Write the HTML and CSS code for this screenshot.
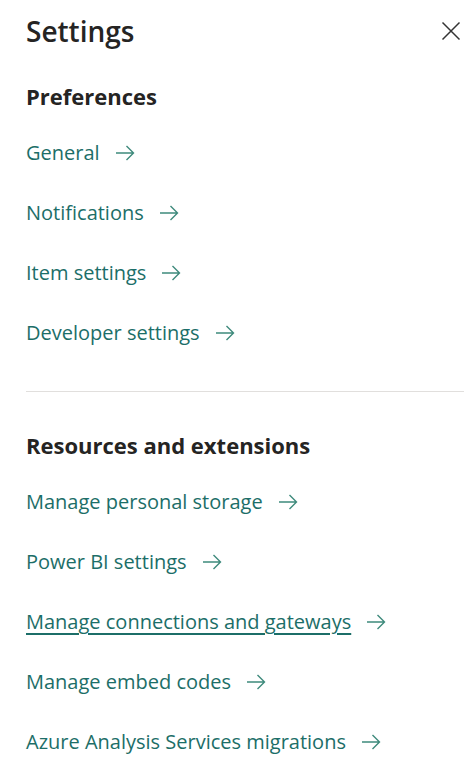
FILE: index.html
```html
<!DOCTYPE html>
<html>
<head>
<meta charset="utf-8">
<link rel="stylesheet" href="styles.css">
</head>
<body>
<div class="panel">
  <header class="head">
    <h1 class="title">Settings</h1>
    <button class="close" aria-label="Close">
      <svg width="20" height="20" viewBox="0 0 20 20"><path d="M1.5 1.5 L18.5 18.5 M18.5 1.5 L1.5 18.5" stroke="#333" stroke-width="1.5" fill="none"/></svg>
    </button>
  </header>
  <section class="section">
    <h2 class="sec-title">Preferences</h2>
    <ul class="links">
      <li><a class="link">General</a><span class="arrow"><svg width="20" height="16" viewBox="0 0 20 16"><path d="M1 8 H18.5 M11.5 1 L18.5 8 L11.5 15" stroke="#3e8a7c" stroke-width="1.4" fill="none"/></svg></span></li>
      <li><a class="link">Notifications</a><span class="arrow"><svg width="20" height="16" viewBox="0 0 20 16"><path d="M1 8 H18.5 M11.5 1 L18.5 8 L11.5 15" stroke="#3e8a7c" stroke-width="1.4" fill="none"/></svg></span></li>
      <li><a class="link">Item settings</a><span class="arrow"><svg width="20" height="16" viewBox="0 0 20 16"><path d="M1 8 H18.5 M11.5 1 L18.5 8 L11.5 15" stroke="#3e8a7c" stroke-width="1.4" fill="none"/></svg></span></li>
      <li><a class="link">Developer settings</a><span class="arrow"><svg width="20" height="16" viewBox="0 0 20 16"><path d="M1 8 H18.5 M11.5 1 L18.5 8 L11.5 15" stroke="#3e8a7c" stroke-width="1.4" fill="none"/></svg></span></li>
    </ul>
  </section>
  <hr class="divider">
  <section class="section second">
    <h2 class="sec-title">Resources and extensions</h2>
    <ul class="links">
      <li><a class="link">Manage personal storage</a><span class="arrow"><svg width="20" height="16" viewBox="0 0 20 16"><path d="M1 8 H18.5 M11.5 1 L18.5 8 L11.5 15" stroke="#3e8a7c" stroke-width="1.4" fill="none"/></svg></span></li>
      <li><a class="link">Power BI settings</a><span class="arrow"><svg width="20" height="16" viewBox="0 0 20 16"><path d="M1 8 H18.5 M11.5 1 L18.5 8 L11.5 15" stroke="#3e8a7c" stroke-width="1.4" fill="none"/></svg></span></li>
      <li><a class="link underline">Manage connections and gateways</a><span class="arrow"><svg width="20" height="16" viewBox="0 0 20 16"><path d="M1 8 H18.5 M11.5 1 L18.5 8 L11.5 15" stroke="#3e8a7c" stroke-width="1.4" fill="none"/></svg></span></li>
      <li><a class="link">Manage embed codes</a><span class="arrow"><svg width="20" height="16" viewBox="0 0 20 16"><path d="M1 8 H18.5 M11.5 1 L18.5 8 L11.5 15" stroke="#3e8a7c" stroke-width="1.4" fill="none"/></svg></span></li>
      <li><a class="link">Azure Analysis Services migrations</a><span class="arrow"><svg width="20" height="16" viewBox="0 0 20 16"><path d="M1 8 H18.5 M11.5 1 L18.5 8 L11.5 15" stroke="#3e8a7c" stroke-width="1.4" fill="none"/></svg></span></li>
    </ul>
  </section>
</div>
</body>
</html>
```
FILE: styles.css
```css
* { box-sizing: border-box; }
html, body { margin: 0; padding: 0; background: #fff; }
body { font-family: "Open Sans", "Noto Sans", sans-serif; color: #252423; }
.panel { width: 476px; padding: 0 12px 0 26px; }
.head { display: flex; align-items: center; justify-content: space-between; height: 62px; }
.title { margin: 0; font-size: 28px; font-weight: 600; line-height: 36px; }
.close { border: 0; background: none; padding: 0; width: 20px; height: 20px; margin-right: 3px; display: flex; }
.sec-title { margin: 0; font-size: 22px; font-weight: 700; line-height: 30px; padding-top: 19px; }
.links { list-style: none; margin: 12px 0 0 0; padding: 0; display: flex; flex-direction: column; }
.links li { display: flex; align-items: center; height: 60px; }
.link { color: #1c6e68; font-size: 20px; line-height: 28px; }
.underline { text-decoration: underline; text-underline-offset: 4px; text-decoration-thickness: 1.5px; }
.arrow { margin-left: 15px; display: flex; }
.divider { border: 0; border-top: 1px solid #e1dfdd; margin: 28px 0 0 0; }
.second .sec-title { padding-top: 38px; }
```
